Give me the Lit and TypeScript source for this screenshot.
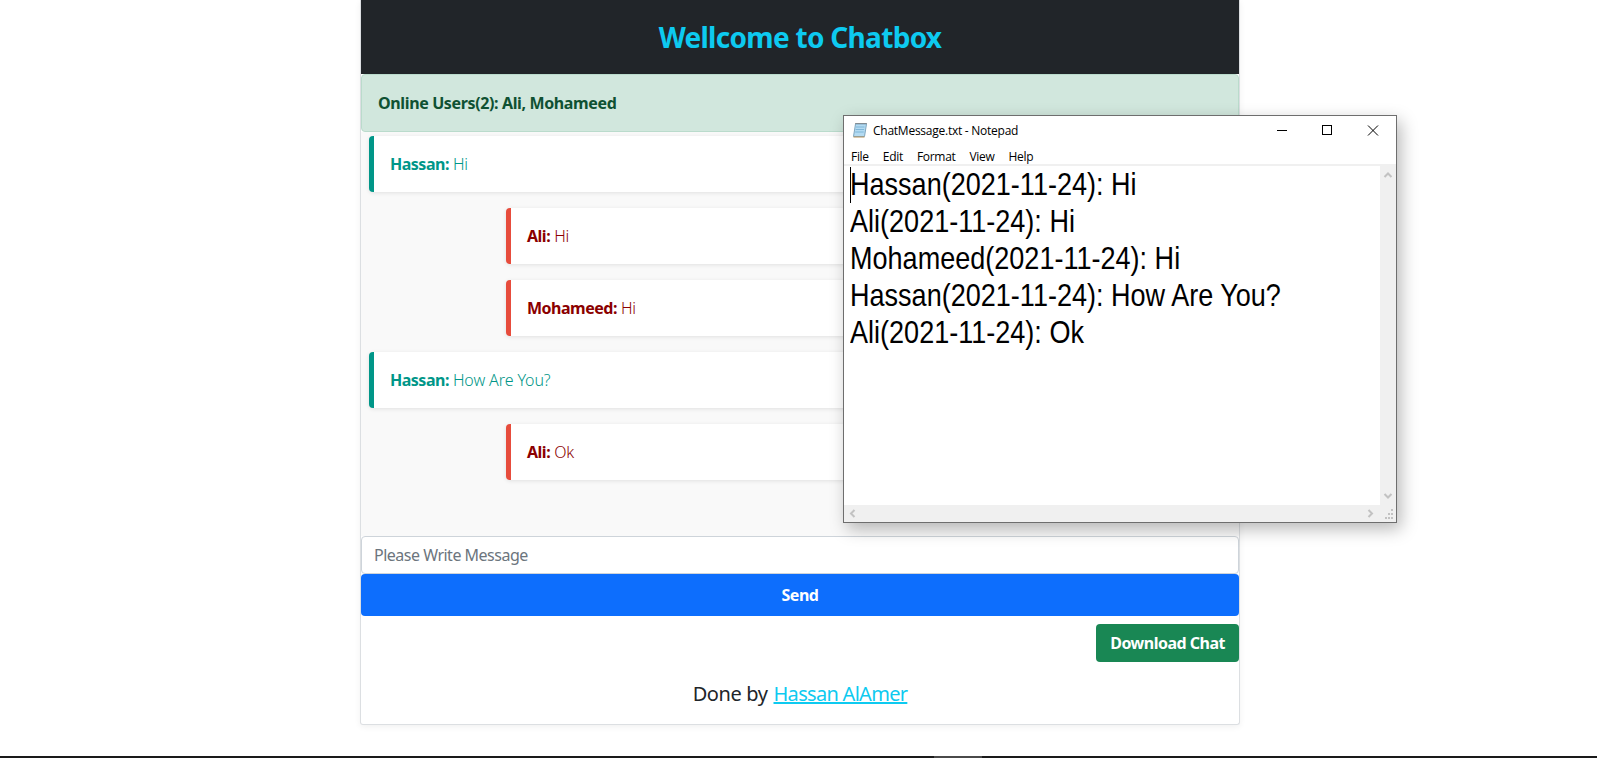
import { LitElement, html, css } from "lit";
import { customElement } from "lit/decorators.js";

type Msg = { name: string; text: string; side: "me" | "other" };
const MSGS: Msg[] = [
  { name: "Hassan", text: "Hi", side: "me" },
  { name: "Ali", text: "Hi", side: "other" },
  { name: "Mohameed", text: "Hi", side: "other" },
  { name: "Hassan", text: "How Are You?", side: "me" },
  { name: "Ali", text: "Ok", side: "other" },
];
const LINES = [
  "Hassan(2021-11-24): Hi",
  "Ali(2021-11-24): Hi",
  "Mohameed(2021-11-24): Hi",
  "Hassan(2021-11-24): How Are You?",
  "Ali(2021-11-24): Ok",
];

@customElement("app-root")
export class AppRoot extends LitElement {
  static styles = css`
    :host {
      display: block;
      font-family: "Noto Sans", "Open Sans", sans-serif;
      color: #212529;
    }
    * { box-sizing: border-box; }
    .page {
      position: relative;
      height: 758px;
      padding-left: 360px;
      display: flex;
      flex-direction: column;
      overflow: hidden;
      background: #fff;
    }
    .card {
      width: 880px;
      height: 725px;
      border: 1px solid #dcdfe2;
      border-top: 0;
      border-radius: 0 0 3px 3px;
      box-shadow: 0 2px 6px rgba(0, 0, 0, 0.06);
      display: flex;
      flex-direction: column;
    }
    .head {
      height: 74px;
      background: #212529;
      color: #0dcaf0;
      display: flex;
      align-items: center;
      justify-content: center;
      font-size: 28px;
      font-weight: 700;
      letter-spacing: -0.7px;
    }
    .alert {
      height: 58px;
      background: #d1e7dd;
      border: 1px solid #badbcc;
      border-radius: 4px;
      color: #0f5132;
      font-weight: 700;
      font-size: 16px;
      letter-spacing: -0.37px;
      padding: 0 16px;
      display: flex;
      align-items: center;
    }
    .msgs {
      height: 404px;
      background: #f9f9f9;
      padding: 4px 8px 0;
      display: flex;
      flex-direction: column;
      gap: 16px;
    }
    .msg {
      height: 56px;
      background: #fff;
      border-left: 5px solid #009688;
      border-radius: 4px;
      box-shadow: 0 1px 4px rgba(0, 0, 0, 0.1);
      color: #009688;
      font-size: 16px;
      padding: 0 16px;
      display: flex;
      align-items: center;
      gap: 4px;
    }
    .msg.other {
      margin-left: 137px;
      border-left-color: #e74c3c;
      color: #8b0000;
    }
    .msg b { font-weight: 700; letter-spacing: -0.5px; }
    .msg span { font-weight: 300; letter-spacing: -0.1px; }
    .input {
      height: 38px;
      border: 1px solid #ced4da;
      border-radius: 4px;
      background: #fff;
      color: #6c757d;
      font-size: 16px;
      letter-spacing: -0.5px;
      padding: 0 12px;
      display: flex;
      align-items: center;
    }
    .send {
      height: 42px;
      background: #0d6efd;
      color: #fff;
      font-weight: 700;
      font-size: 16px;
      letter-spacing: -0.5px;
      border-radius: 4px;
      display: flex;
      align-items: center;
      justify-content: center;
    }
    .actions {
      display: flex;
      justify-content: flex-end;
      padding-top: 8px;
    }
    .dl {
      height: 38px;
      padding: 0 14px;
      background: #198754;
      color: #fff;
      font-weight: 700;
      font-size: 16px;
      letter-spacing: -0.5px;
      border-radius: 4px;
      display: flex;
      align-items: center;
    }
    .foot {
      flex: 1;
      display: flex;
      align-items: center;
      justify-content: center;
      font-size: 20px;
      letter-spacing: -0.4px;
      gap: 6px;
    }
    .foot a { color: #0dcaf0; text-decoration: underline; letter-spacing: -0.7px; }
    .bar {
      margin: auto 0 0 -360px;
      width: 1597px;
      height: 2px;
      background: #1a1a1a;
      padding-left: 934px;
    }
    .thumb { width: 48px; height: 2px; background: #4a4a4a; }
    .np {
      position: absolute;
      left: 843px;
      top: 115px;
      width: 554px;
      height: 408px;
      background: #fff;
      border: 1px solid #6e6e6e;
      box-shadow: 4px 6px 16px rgba(0, 0, 0, 0.28);
      display: flex;
      flex-direction: column;
      font-family: "Open Sans", "Noto Sans", sans-serif;
      color: #000;
    }
    .tb {
      height: 28px;
      display: flex;
      align-items: center;
      padding-left: 8px;
      font-size: 12px;
      letter-spacing: -0.25px;
      gap: 5px;
    }
    .tb .title { flex: 1; }
    .ctls { display: flex; }
    .ctl { width: 45px; height: 28px; }
    .menu {
      height: 22px;
      display: flex;
      align-items: center;
      padding: 4px 0 0 7px;
      gap: 14px;
      font-size: 12px;
      letter-spacing: -0.3px;
      border-bottom: 2px solid #f0f0f0;
    }
    .body { flex: 1; display: flex; min-height: 0; }
    .text {
      flex: 1;
      padding: 0 0 0 6px;
      font-family: "Liberation Sans", Arial, sans-serif;
      font-size: 32px;
      line-height: 37px;
      position: relative;
      overflow: hidden;
      white-space: nowrap;
    }
    .lines { transform: scaleX(0.845); transform-origin: left top; }
    .caret {
      position: absolute;
      left: 6px;
      top: 1px;
      width: 1px;
      height: 36px;
      background: #000;
    }
    .vs {
      width: 16px;
      background: #f0f0f0;
      display: flex;
      flex-direction: column;
      justify-content: space-between;
      padding: 4px 0;
    }
    .hs {
      height: 17px;
      background: #f0f0f0;
      display: flex;
      justify-content: space-between;
      align-items: center;
      gap: 3px;
    }
    .fill { flex: 1; }
    svg { display: block; }
  `;

  private chev(rot: number) {
    return html`<svg width="16" height="9" viewBox="0 0 16 9" style="transform:rotate(${rot}deg)">
      <path d="M4.5 7 8 3.5 11.5 7" fill="none" stroke="#c2c2c2" stroke-width="2"></path>
    </svg>`;
  }

  render() {
    return html`<div class="page">
      <div class="card">
        <div class="head">Wellcome to Chatbox</div>
        <div class="alert">Online Users(2): Ali, Mohameed</div>
        <div class="msgs">
          ${MSGS.map(
            (m) => html`<div class="msg ${m.side}"><b>${m.name}:</b><span>${m.text}</span></div>`
          )}
        </div>
        <div class="input">Please Write Message</div>
        <div class="send">Send</div>
        <div class="actions"><div class="dl">Download Chat</div></div>
        <div class="foot">Done by <a>Hassan AlAmer</a></div>
      </div>
      <div class="bar"><div class="thumb"></div></div>
      <div class="np">
        <div class="tb">
          <svg width="16" height="16" viewBox="0 0 16 16">
            <path d="M3.5 2h11l-2 12.5H1.5z" fill="#b4dbf2" stroke="#7fa6bf"></path>
            <path d="M4 5h8.5M3.6 7.5h8.5M3.2 10h8.5" stroke="#7fb6d8"></path>
            <path d="M3.5 1.5h11" stroke="#444" stroke-dasharray="1 1"></path>
            <path d="M1.5 15h11" stroke="#b8925a"></path>
          </svg>
          <span class="title">ChatMessage.txt - Notepad</span>
          <div class="ctls">
            <svg class="ctl" viewBox="0 0 45 28"><path d="M16 14.5h10" stroke="#000"></path></svg>
            <svg class="ctl" viewBox="0 0 45 28"><rect x="16.5" y="9.5" width="9" height="9" fill="none" stroke="#000"></rect></svg>
            <svg class="ctl" viewBox="0 0 45 28"><path d="M17 9.5l10 10M27 9.5l-10 10" stroke="#000"></path></svg>
          </div>
        </div>
        <div class="menu"><span>File</span><span>Edit</span><span>Format</span><span>View</span><span>Help</span></div>
        <div class="body">
          <div class="text">
            <div class="caret"></div>
            <div class="lines">${LINES.map((l) => html`<div>${l}</div>`)}</div>
          </div>
          <div class="vs">${this.chev(0)}${this.chev(180)}</div>
        </div>
        <div class="hs">
          ${this.chev(-90)}
          <span class="fill"></span>
          ${this.chev(90)}
          <svg width="14" height="14" viewBox="0 0 14 14" fill="#c2c2c2">
            <rect x="9" y="2" width="2" height="2"></rect><rect x="6" y="6" width="2" height="2"></rect><rect x="9" y="6" width="2" height="2"></rect>
            <rect x="3" y="10" width="2" height="2"></rect><rect x="6" y="10" width="2" height="2"></rect><rect x="9" y="10" width="2" height="2"></rect>
          </svg>
        </div>
      </div>
    </div>`;
  }
}
